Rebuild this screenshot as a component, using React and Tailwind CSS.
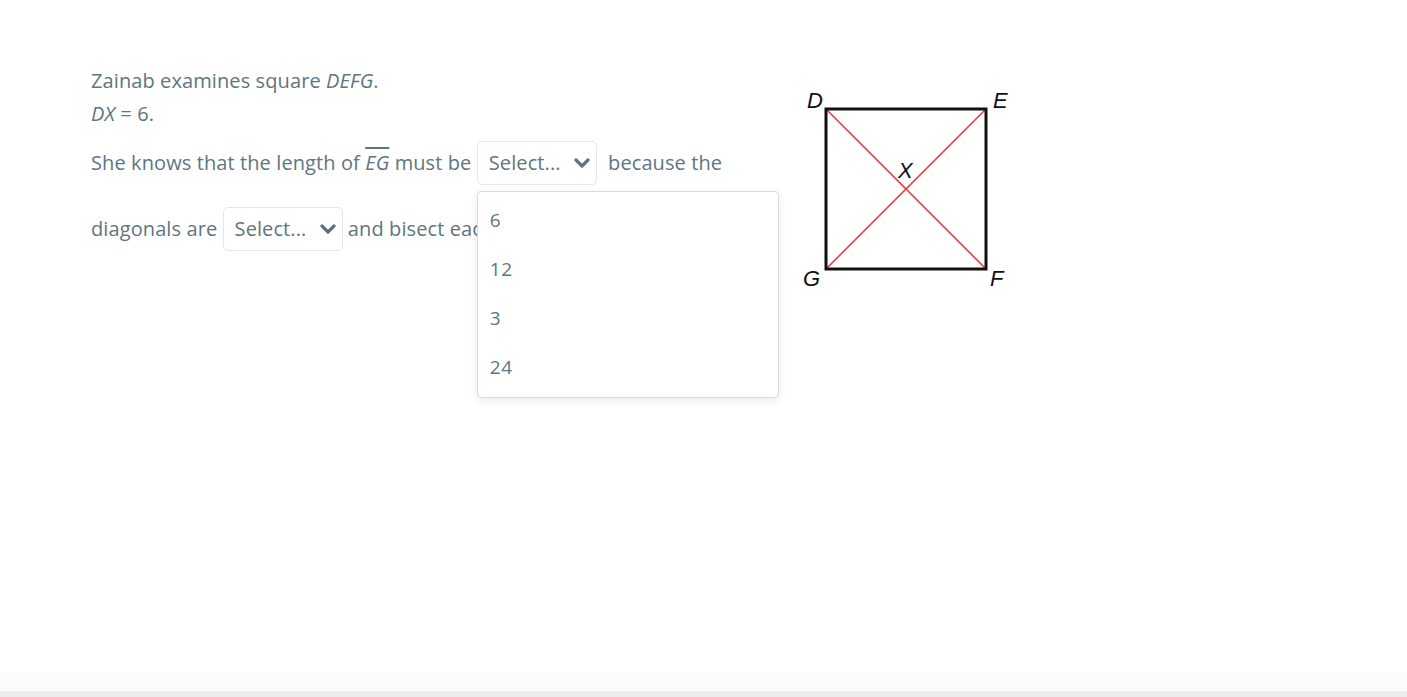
import React from 'react';

const Chevron = () => (
  <svg width="16" height="12" viewBox="0 0 16 12" className="ml-auto">
    <polyline points="2,3 8,9 14,3" fill="none" stroke="#5b7480" strokeWidth="3.2" strokeLinecap="round" strokeLinejoin="round" />
  </svg>
);

const SelectBox = ({ open, options = [], className = '' }) => (
  <span className={`relative inline-flex ${className}`}>
    <span className="inline-flex items-center h-[44px] w-[120px] pl-[11px] pr-[6px] border border-[#e3e7e9] rounded-[5px] bg-white leading-none">
      <span>Select...</span>
      <Chevron />
    </span>
    {open && (
      <span className="absolute left-0 top-[50px] z-10 w-[302px] flex flex-col pt-[4px] pb-[5px] bg-white border border-[#dadada] rounded-[4px] shadow-[0_3px_10px_rgba(0,0,0,0.08)] tracking-[0.6px]">
        {options.map((o) => (
          <span key={o} className="h-[49px] flex items-center px-[12px] text-[19px] leading-none">
            {o}
          </span>
        ))}
      </span>
    )}
  </span>
);

export default function App() {
  return (
    <div className="min-h-[697px] flex flex-col bg-white text-[#5e7680] font-['Open_Sans',sans-serif]">
      <main className="flex-1 flex pl-[91px] pt-[64px]">
        <div className="w-[700px] text-[20px] tracking-[0.1px]">
          <p className="leading-[33px]">
            Zainab examines square <i>DEFG</i>.
          </p>
          <p className="leading-[33px]">
            <i>DX</i> = 6.
          </p>
          <p className="leading-[66px]">
            She knows that the length of <i className="overline">EG</i> must be{' '}
            <SelectBox open options={['6', '12', '3', '24']} className="mr-[6px]" />{' '}
            because the diagonals are <SelectBox /> and bisect each other.
          </p>
        </div>
        <figure className="ml-[9px] mt-[21px]">
          <svg width="220" height="210" viewBox="0 0 220 210">
            <line x1="26" y1="24" x2="186" y2="184" stroke="#e53935" strokeWidth="1.5" />
            <line x1="186" y1="24" x2="26" y2="184" stroke="#e53935" strokeWidth="1.5" />
            <rect x="26" y="24" width="160" height="160" fill="none" stroke="#111" strokeWidth="3" />
            <g fontFamily="'Liberation Sans', sans-serif" fontStyle="italic" fontSize="22" fill="#111">
              <text x="7" y="23">D</text>
              <text x="193" y="23">E</text>
              <text x="98" y="93">X</text>
              <text x="3" y="201">G</text>
              <text x="190" y="201">F</text>
            </g>
          </svg>
        </figure>
      </main>
      <div className="h-[18px] bg-[#fafcfc]" />
      <div className="h-[6px] bg-[#ebebeb]" />
    </div>
  );
}
